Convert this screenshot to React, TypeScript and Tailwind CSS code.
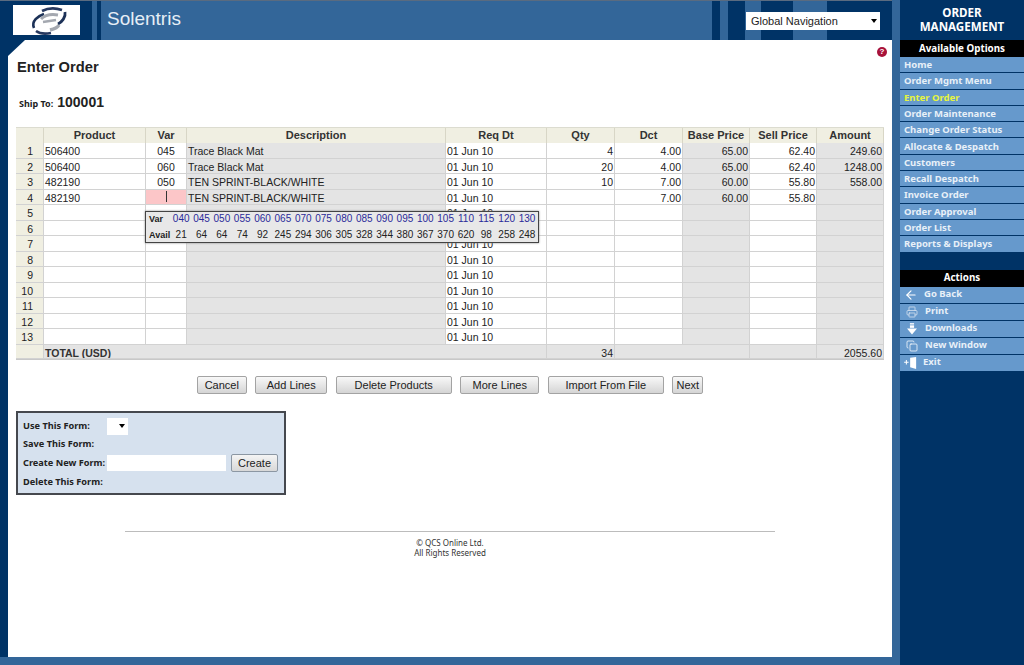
import { ArrowLeft, Printer, Copy } from "lucide-react";

const arial = "font-['Liberation_Sans',Arial,sans-serif]";
const noto = "font-['Noto_Sans',Tahoma,sans-serif]";

const columns = ["", "Product", "Var", "Description", "Req Dt", "Qty", "Dct", "Base Price", "Sell Price", "Amount"];
const gridCols = "grid grid-cols-[28px_102px_41px_259px_101px_68px_68px_67px_67px_67px]";

const orders = [
  { product: "506400", variant: "045", desc: "Trace Black Mat", qty: "4", dct: "4.00", base: "65.00", sell: "62.40", amount: "249.60" },
  { product: "506400", variant: "060", desc: "Trace Black Mat", qty: "20", dct: "4.00", base: "65.00", sell: "62.40", amount: "1248.00" },
  { product: "482190", variant: "050", desc: "TEN SPRINT-BLACK/WHITE", qty: "10", dct: "7.00", base: "60.00", sell: "55.80", amount: "558.00" },
  { product: "482190", variant: "", desc: "TEN SPRINT-BLACK/WHITE", qty: "", dct: "7.00", base: "60.00", sell: "55.80", amount: "" },
];

const variants = ["040", "045", "050", "055", "060", "065", "070", "075", "080", "085", "090", "095", "100", "105", "110", "115", "120", "130"];
const avail = ["21", "64", "64", "74", "92", "245", "294", "306", "305", "328", "344", "380", "367", "370", "620", "98", "258", "248"];

const menu = ["Home", "Order Mgmt Menu", "Enter Order", "Order Maintenance", "Change Order Status", "Allocate & Despatch", "Customers", "Recall Despatch", "Invoice Order", "Order Approval", "Order List", "Reports & Displays"];

const cell = "border-r border-b border-[#d2d2d2] px-px overflow-hidden whitespace-nowrap leading-[16px]";
const white = `${cell} bg-white`;
const grey = `${cell} bg-[#e4e4e4]`;

function Logo() {
  return (
    <svg viewBox="0 0 66 30" className="h-[30px] w-[66px]">
      <path d="M20 23 C17 16 24 11 30 9" fill="none" stroke="#1c3157" strokeWidth="2.6" />
      <path d="M28 6 C34 3 42 3 48 5" fill="none" stroke="#27395f" strokeWidth="2.6" />
      <path d="M51 7 C52 12 48 17 44 19" fill="none" stroke="#1c3157" strokeWidth="2.8" />
      <path d="M22 26 C26 29 32 29 37 28" fill="none" stroke="#27395f" strokeWidth="2.6" />
      <path d="M27 14 C31 10 38 9 44 10" fill="none" stroke="#a4a8b0" strokeWidth="3" />
      <path d="M29 17 L42 15" fill="none" stroke="#a4a8b0" strokeWidth="2.6" />
      <path d="M36 25 C40 24 44 22 45 20" fill="none" stroke="#a4a8b0" strokeWidth="3.4" />
    </svg>
  );
}

function ExitIcon() {
  return (
    <svg viewBox="0 0 16 14" className="h-[12px] w-[14px] shrink-0" fill="#fff">
      <path d="M0 5.5h2V3.5h1.2v2h2v1.2h-2v2H2v-2H0z" />
      <path d="M7 1 L14 0 V14 L7 12 Z" />
    </svg>
  );
}

function DownIcon() {
  return (
    <svg viewBox="0 0 12 14" className="h-[12px] w-[10px] shrink-0" fill="#fff">
      <rect x="3.5" y="0" width="5" height="1.6" />
      <rect x="3.5" y="2.6" width="5" height="3" />
      <path d="M0 6.5 H12 L6 13.5 Z" />
    </svg>
  );
}

const actions = [
  { label: "Go Back", icon: <ArrowLeft size={14} strokeWidth={2} color="#fff" className="shrink-0" />, pad: "pl-[5px]", gap: "ml-[8px]" },
  { label: "Print", icon: <Printer size={12} strokeWidth={1.5} color="#dce6f2" className="shrink-0" />, pad: "pl-[6px]", gap: "ml-[8px]" },
  { label: "Downloads", icon: <DownIcon />, pad: "pl-[6px]", gap: "ml-[8px]" },
  { label: "New Window", icon: <Copy size={12} strokeWidth={1.5} color="#fff" className="shrink-0" />, pad: "pl-[6px]", gap: "ml-[8px]" },
  { label: "Exit", icon: <ExitIcon />, pad: "pl-[5px]", gap: "ml-[7px]" },
];

function Caret() {
  return <span className="h-0 w-0 border-x-[3.5px] border-t-[4px] border-x-transparent border-t-black" />;
}

function Btn({ label, width }: { label: string; width: string }) {
  return (
    <button
      className={`${width} h-[18px] rounded-[2px] border border-[#a3a3a3] bg-gradient-to-b from-[#f8f8f8] to-[#d5d5d5] text-[11px] leading-none text-[#222] ${arial}`}
    >
      {label}
    </button>
  );
}

function OrderGrid() {
  return (
    <div className={`relative mx-2 w-[868px] border-t border-[#dcdcd0] text-[10.5px] text-[#222] ${arial}`}>
      <div className={`${gridCols} h-[15.5px] bg-[#f0efe2] text-[11px] font-bold text-[#333]`}>
        {columns.map((c, i) => (
          <div key={i} className="border-r border-b border-[#d8d6c6] text-center leading-[15px] whitespace-nowrap">
            {c}
          </div>
        ))}
      </div>
      {Array.from({ length: 13 }).map((_, i) => {
        const o = orders[i];
        return (
          <div key={i} className={`${gridCols} h-[15.5px]`}>
            <div className={`${cell} bg-[#f0efe2] pr-[10px] text-right`}>{i + 1}</div>
            <div className={`${white} pl-px`}>{o?.product}</div>
            <div className={`${i === 3 ? "bg-[#fcc6c8]" : "bg-white"} ${cell} text-center`}>
              {i === 3 ? <span className="mt-[1px] ml-[1px] inline-block h-[11px] w-px bg-[#333]" /> : o?.variant}
            </div>
            <div className={`${grey} pl-px`}>{o?.desc}</div>
            <div className={`${white} pl-px`}>01 Jun 10</div>
            <div className={`${white} text-right`}>{o?.qty}</div>
            <div className={`${white} text-right`}>{o?.dct}</div>
            <div className={`${grey} text-right`}>{o?.base}</div>
            <div className={`${white} text-right`}>{o?.sell}</div>
            <div className={`${grey} text-right`}>{o?.amount}</div>
          </div>
        );
      })}
      <div className={`${gridCols} h-[15.5px] border-b border-[#c8c8c8]`}>
        <div className={`${cell} bg-[#f0efe2]`} />
        <div className={`${grey} col-span-4 pl-px font-bold text-[#333]`}>TOTAL (USD)</div>
        <div className={`${grey} text-right`}>34</div>
        <div className={`${grey} col-span-2`} />
        <div className={grey} />
        <div className={`${grey} text-right`}>2055.60</div>
      </div>

      {/* variant availability popup */}
      <div className="absolute top-[83px] left-[129px] flex h-[32px] w-[394px] flex-col justify-center gap-[2px] border border-[#444] bg-[#e8e8e8] pl-[2px] text-[10px] shadow-[0_0_2px_#888]">
        <div className="flex items-center leading-[14px]">
          <span className="w-[23px] shrink-0 pl-px text-[9px] font-bold">Var</span>
          {variants.map((v) => (
            <span key={v} className="w-[20.35px] shrink-0 text-center text-[#2a2a9a]">{v}</span>
          ))}
        </div>
        <div className="flex items-center leading-[14px]">
          <span className="w-[23px] shrink-0 pl-px text-[9px] font-bold">Avail</span>
          {avail.map((v, i) => (
            <span key={i} className="w-[20.35px] shrink-0 text-center">{v}</span>
          ))}
        </div>
      </div>
    </div>
  );
}

function SavedForms() {
  const label = `w-[89px] shrink-0 pl-[5px] text-[9.2px] font-bold whitespace-nowrap text-[#222] ${noto}`;
  return (
    <div className="mt-[17px] ml-2 flex h-[84px] w-[270px] flex-col border-2 border-[#45484e] bg-[#d6e1ee] pt-[4px]">
      <div className="flex h-[18px] items-center">
        <span className={label}>Use This Form:</span>
        <span className="flex h-[17px] w-[21px] items-center justify-end bg-white pr-[3px]"><Caret /></span>
      </div>
      <div className="flex h-[18px] items-center">
        <span className={label}>Save This Form:</span>
      </div>
      <div className="flex h-[20px] items-center">
        <span className={label}>Create New Form:</span>
        <span className="h-[16px] w-[119px] bg-white" />
        <button className={`ml-[5px] h-[18px] w-[47px] rounded-[2px] border border-[#8c97a3] bg-gradient-to-b from-[#f4f4f4] to-[#d8d8d8] text-[11px] leading-none text-[#222] ${arial}`}>
          Create
        </button>
      </div>
      <div className="flex h-[18px] items-center">
        <span className={label}>Delete This Form:</span>
      </div>
    </div>
  );
}

function Sidebar() {
  return (
    <aside className={`flex w-[124px] flex-col bg-[#003366] text-white ${noto}`}>
      <div className="flex h-[40px] items-center justify-center text-center text-[11.6px] leading-[14px] font-bold">
        <span>ORDER<br />MANAGEMENT</span>
      </div>
      <div className="flex h-[17px] items-center justify-center bg-black pt-px text-[9.8px] font-bold">Available Options</div>
      <nav className="flex flex-col">
        {menu.map((m) => (
          <div
            key={m}
            className={`flex h-[16.3px] items-center border-b border-[#003366] bg-[#6699cc] pt-px pl-[4px] text-[9.5px] font-bold whitespace-nowrap ${m === "Enter Order" ? "text-[#e6f53c]" : "text-[#e8f0f8]"}`}
          >
            {m}
          </div>
        ))}
      </nav>
      <div className="mt-[17px] flex h-[17px] items-center justify-center bg-black pt-px text-[9.8px] font-bold">Actions</div>
      <div className="flex flex-col">
        {actions.map((a) => (
          <div key={a.label} className={`flex h-[17px] items-center border-b border-[#003366] bg-[#6699cc] text-[9.5px] font-bold text-[#e8f0f8] ${a.pad}`}>
            <span className="flex w-[11px] items-center justify-center">{a.icon}</span>
            <span className={a.gap}>{a.label}</span>
          </div>
        ))}
      </div>
    </aside>
  );
}

export default function App() {
  return (
    <div className="flex h-[665px] w-[1024px] overflow-hidden bg-[#003366]">
      <div className="flex w-[892px] flex-col">
        {/* header band */}
        <header className="flex h-[40px] shrink-0 border-t border-[#5a6b80]">
          <div className="flex w-[92px] items-start bg-[#003366] pt-[4px] pl-[13px]">
            <div className="flex h-[30px] w-[67px] items-center justify-center bg-white">
              <Logo />
            </div>
          </div>
          <div className="w-[5px] bg-[#336699]" />
          <div className="w-[4px] bg-[#003366]" />
          <div className={`flex w-[611px] items-center bg-[#336699] pb-[2px] pl-[6px] text-[19px] text-[#e6eef6] ${arial}`}>Solentris</div>
          <div className="w-[8px] bg-[#003366]" />
          <div className="w-[8px] bg-[#336699]" />
          <div className="w-[17px] bg-[#003366]" />
          <div className="relative flex flex-1">
            <div className="w-[16px] bg-[#336699]" />
            <div className="w-[32px] bg-[#003366]" />
            <div className="w-[34px] bg-[#336699]" />
            <div className="flex-1 bg-[#003366]" />
            <div className={`absolute top-[11px] left-[1px] flex h-[18px] w-[134px] items-center justify-between bg-white pr-[3px] pl-[5px] text-[11px] text-[#222] ${arial}`}>
              Global Navigation
              <Caret />
            </div>
          </div>
        </header>

        <div className="flex flex-1 pl-2">
          {/* main panel */}
          <main className="relative flex flex-1 flex-col bg-white [clip-path:polygon(17px_0,100%_0,100%_100%,0_100%,0_16px)]">
            <span className={`absolute top-[7px] right-[5px] flex h-[10px] w-[10px] items-center justify-center rounded-full bg-[#a8123a] text-[8px] leading-none font-bold text-white ${arial}`}>?</span>
            <h1 className={`mt-[19px] ml-[9px] text-[14.7px] leading-[16px] font-bold text-[#222] ${arial}`}>Enter Order</h1>
            <div className={`mt-[19px] ml-[11px] flex items-baseline text-[#222] ${arial}`}>
              <span className={`mr-[4px] text-[9px] font-bold ${noto}`}>Ship To:</span>
              <span className="text-[14px] leading-[16px] font-bold">100001</span>
            </div>
            <div className="mt-[16px]">
              <OrderGrid />
            </div>
            <div className="mt-[16px] flex justify-center gap-[8.5px]">
              <Btn label="Cancel" width="w-[50px]" />
              <Btn label="Add Lines" width="w-[72px]" />
              <Btn label="Delete Products" width="w-[116px]" />
              <Btn label="More Lines" width="w-[79px]" />
              <Btn label="Import From File" width="w-[116px]" />
              <Btn label="Next" width="w-[31px]" />
            </div>
            <SavedForms />
            <div className="mx-auto mt-[36px] w-[650px] border-t border-[#bcbcbc]" />
            <p className={`mt-[6px] text-center text-[8px] leading-[10px] text-[#333] ${noto}`}>
              © QCS Online Ltd.<br />All Rights Reserved
            </p>
          </main>
        </div>
        <div className="h-[8px] shrink-0 bg-[#336699]" />
      </div>
      <div className="w-[8px] bg-[#336699]" />
      <Sidebar />
    </div>
  );
}
